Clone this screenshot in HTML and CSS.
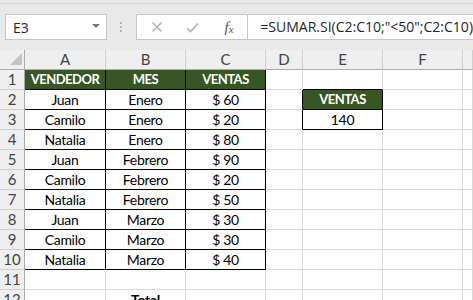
FILE: index.html
```html
<!DOCTYPE html>
<html lang="es">
  <head>
    <meta charset="UTF-8" />
    <meta name="viewport" content="width=device-width, initial-scale=1.0" />
    <title>SUMAR.SI</title>
    <link rel="stylesheet" href="styles.css">
  </head>
  <body>
    <div class="ribbon"></div>
    <div class="toolbar">
      <div class="namebox">
        <span>E3</span>
        <span class="caret"></span>
      </div>
      <div class="grip"><i></i><i></i><i></i></div>
      <div class="fxbox">
        <svg class="icon" width="12" height="12" viewBox="0 0 12 12">
          <path d="M1.5 1.5 L10.5 10.5 M10.5 1.5 L1.5 10.5" stroke="#b3b3b3" stroke-width="1.6" fill="none" />
        </svg>
        <svg class="icon" width="13" height="11" viewBox="0 0 13 11">
          <path d="M1 6 L4.5 9.5 L12 1.5" stroke="#b3b3b3" stroke-width="1.6" fill="none" />
        </svg>
        <span class="fx">f<sub>x</sub></span>
      </div>
      <div class="formula">=SUMAR.SI(C2:C10;"&lt;50";C2:C10)</div>
    </div>

    <div class="sheet">
      <div class="c ch corner"><span class="tri"></span></div>
      <div class="c ch">A</div>
      <div class="c ch">B</div>
      <div class="c ch">C</div>
      <div class="c ch">D</div>
      <div class="c ch">E</div>
      <div class="c ch">F</div>
      <div class="c ch"></div>

      <div class="c rh">1</div>
      <div class="c hd">VENDEDOR</div>
      <div class="c hd">MES</div>
      <div class="c hd">VENTAS</div>
      <div class="c"></div>
      <div class="c bt"></div>
      <div class="c"></div>
      <div class="c"></div>

      <div class="c rh">2</div>
      <div class="c bx">Juan</div>
      <div class="c bx">Enero</div>
      <div class="c bx">$ 60</div>
      <div class="c bl"></div>
      <div class="c hd">VENTAS</div>
      <div class="c"></div>
      <div class="c"></div>

      <div class="c rh">3</div>
      <div class="c bx">Camilo</div>
      <div class="c bx">Enero</div>
      <div class="c bx">$ 20</div>
      <div class="c bl"></div>
      <div class="c bx">140</div>
      <div class="c"></div>
      <div class="c"></div>

      <div class="c rh">4</div>
      <div class="c bx">Natalia</div>
      <div class="c bx">Enero</div>
      <div class="c bx">$ 80</div>
      <div class="c"></div>
      <div class="c"></div>
      <div class="c"></div>
      <div class="c"></div>

      <div class="c rh">5</div>
      <div class="c bx">Juan</div>
      <div class="c bx">Febrero</div>
      <div class="c bx">$ 90</div>
      <div class="c"></div>
      <div class="c"></div>
      <div class="c"></div>
      <div class="c"></div>

      <div class="c rh">6</div>
      <div class="c bx">Camilo</div>
      <div class="c bx">Febrero</div>
      <div class="c bx">$ 20</div>
      <div class="c"></div>
      <div class="c"></div>
      <div class="c"></div>
      <div class="c"></div>

      <div class="c rh">7</div>
      <div class="c bx">Natalia</div>
      <div class="c bx">Febrero</div>
      <div class="c bx">$ 50</div>
      <div class="c"></div>
      <div class="c"></div>
      <div class="c"></div>
      <div class="c"></div>

      <div class="c rh">8</div>
      <div class="c bx">Juan</div>
      <div class="c bx">Marzo</div>
      <div class="c bx">$ 30</div>
      <div class="c"></div>
      <div class="c"></div>
      <div class="c"></div>
      <div class="c"></div>

      <div class="c rh">9</div>
      <div class="c bx">Camilo</div>
      <div class="c bx">Marzo</div>
      <div class="c bx">$ 30</div>
      <div class="c"></div>
      <div class="c"></div>
      <div class="c"></div>
      <div class="c"></div>

      <div class="c rh">10</div>
      <div class="c bx">Natalia</div>
      <div class="c bx">Marzo</div>
      <div class="c bx">$ 40</div>
      <div class="c"></div>
      <div class="c"></div>
      <div class="c"></div>
      <div class="c"></div>

      <div class="c rh">11</div>
      <div class="c"></div>
      <div class="c"></div>
      <div class="c"></div>
      <div class="c"></div>
      <div class="c"></div>
      <div class="c"></div>
      <div class="c"></div>

      <div class="c rh">12</div>
      <div class="c"></div>
      <div class="c b">Total</div>
      <div class="c"></div>
      <div class="c"></div>
      <div class="c"></div>
      <div class="c"></div>
      <div class="c"></div>
    </div>
  </body>
</html>
```

FILE: styles.css
```css
body {
  margin: 0;
  background: #ffffff;
  font-family: Lato, "Open Sans", sans-serif;
  overflow: hidden;
}
.ribbon {
  height: 3px;
  background: #e9e9e9;
}
.toolbar {
  height: 47px;
  box-sizing: border-box;
  border-top: 1px solid #d6d6d6;
  background: #e9e9e9;
  display: flex;
  align-items: flex-start;
  padding-top: 10px;
}
.namebox {
  margin-left: 5px;
  width: 103px;
  height: 26px;
  box-sizing: border-box;
  border: 1px solid #c6c6c6;
  background: #ffffff;
  display: flex;
  align-items: center;
  justify-content: space-between;
  padding: 0 6px 0 7px;
  font-family: "Open Sans", sans-serif;
  font-size: 14px;
  color: #262626;
}
.caret {
  width: 0;
  height: 0;
  border-left: 4px solid transparent;
  border-right: 4px solid transparent;
  border-top: 4px solid #7a7a7a;
  margin-top: -2px;
}
.grip {
  width: 29px;
  height: 26px;
  display: flex;
  flex-direction: column;
  align-items: center;
  justify-content: center;
  gap: 2px;
}
.grip i {
  width: 2px;
  height: 2px;
  background: #b5b5b5;
}
.fxbox {
  width: 113px;
  height: 26px;
  box-sizing: border-box;
  border: 1px solid #c6c6c6;
  border-right: none;
  background: #ffffff;
  display: flex;
  align-items: center;
  padding-left: 14px;
  gap: 23px;
}
.fx {
  font-family: "Liberation Serif", serif;
  font-style: italic;
  font-size: 15px;
  color: #555555;
  margin-left: 3px;
}
.fx sub {
  font-size: 11px;
  vertical-align: -1px;
}
.formula {
  flex: 1;
  height: 26px;
  box-sizing: border-box;
  border: 1px solid #c6c6c6;
  border-right: none;
  background: #ffffff;
  padding-left: 12px;
  font-family: "Open Sans", sans-serif;
  font-size: 14px;
  line-height: 24px;
  color: #262626;
  white-space: nowrap;
}
.sheet {
  display: grid;
  grid-template-columns: 25px 81px 80px 80px 37px 80px 80px 1fr;
  grid-template-rows: 20px;
  grid-auto-rows: 20px;
}
.c {
  box-sizing: border-box;
  border-right: 1px solid #d9d9d9;
  border-bottom: 1px solid #d9d9d9;
  font-size: 14px;
  letter-spacing: -0.3px;
  line-height: 19px;
  text-align: center;
  color: #000000;
  white-space: nowrap;
  overflow: hidden;
}
.ch {
  background: #efefef;
  color: #444444;
  border-right-color: #cfcfcf;
  border-bottom-color: #ababab;
  font-size: 15px;
  letter-spacing: 0;
  line-height: 19px;
}
.corner {
  position: relative;
  border-right-color: #ababab;
}
.tri {
  position: absolute;
  right: 2px;
  bottom: 4px;
  width: 0;
  height: 0;
  border-left: 12px solid transparent;
  border-bottom: 12px solid #c4c4c4;
}
.rh {
  background: #efefef;
  color: #444444;
  border-right-color: #ababab;
  border-bottom-color: #cfcfcf;
  font-size: 15px;
  letter-spacing: 0;
}
.hd {
  background: #375623;
  color: #ffffff;
  font-weight: bold;
  font-size: 13px;
  letter-spacing: -0.5px;
  border-right-color: #000000;
  border-bottom-color: #000000;
}
.bx {
  border-right-color: #000000;
  border-bottom-color: #000000;
}
.bl {
  border-right-color: #000000;
}
.bt {
  border-bottom-color: #000000;
}
.b {
  font-weight: bold;
}
```
